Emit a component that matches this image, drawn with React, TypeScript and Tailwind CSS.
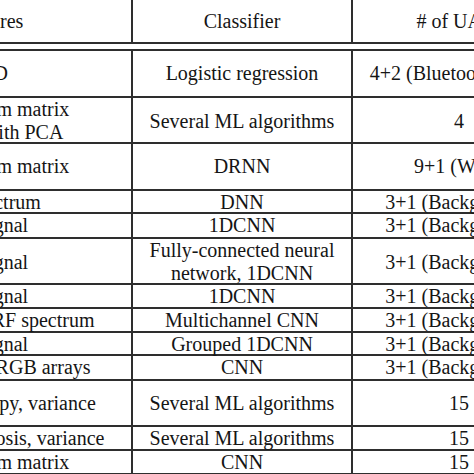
type Row = {
  h: string;
  feature: React.ReactNode;
  classifier: React.ReactNode;
  uavs: string;
};

const rows: Row[] = [
  { h: "h-[47px]", feature: "PSD", classifier: "Logistic regression", uavs: "4+2 (Bluetooth, WiFi)" },
  {
    h: "h-[46px]",
    feature: (
      <>
        Spectrogram matrix
        <br />
        reduced with PCA
      </>
    ),
    classifier: "Several ML algorithms",
    uavs: "4"
  },
  { h: "h-[47px]", feature: "Spectrogram matrix", classifier: "DRNN", uavs: "9+1 (WiFi)" },
  { h: "h-[23px]", feature: "RF spectrum", classifier: "DNN", uavs: "3+1 (Background)" },
  { h: "h-[25px]", feature: "RF signal", classifier: "1DCNN", uavs: "3+1 (Background)" },
  {
    h: "h-[46px]",
    feature: "RF signal",
    classifier: (
      <>
        Fully-connected neural
        <br />
        network, 1DCNN
      </>
    ),
    uavs: "3+1 (Background)"
  },
  { h: "h-[24px]", feature: "RF signal", classifier: "1DCNN", uavs: "3+1 (Background)" },
  { h: "h-[24px]", feature: "Raw signals, RF spectrum", classifier: "Multichannel CNN", uavs: "3+1 (Background)" },
  { h: "h-[23px]", feature: "RF signal", classifier: "Grouped 1DCNN", uavs: "3+1 (Background)" },
  { h: "h-[25px]", feature: "Spectrogram RGB arrays", classifier: "CNN", uavs: "3+1 (Background)" },
  { h: "h-[46px]", feature: "Shannon entropy, variance", classifier: "Several ML algorithms", uavs: "15" },
  { h: "h-[24px]", feature: "Skewness, kurtosis, variance", classifier: "Several ML algorithms", uavs: "15" },
  { h: "h-[24px]", feature: "Spectrogram matrix", classifier: "CNN", uavs: "15" },
  { h: "h-[24px]", feature: "Spectrogram matrix", classifier: "CNN", uavs: "15" }
];

function Cell({ children, last }: { children: React.ReactNode; last?: boolean }) {
  return (
    <div
      className={
        last
          ? "flex items-center justify-center text-center px-1"
          : "flex items-center justify-center text-center px-1 border-r-2 border-[#2e2e2e]"
      }
    >
      <span className="whitespace-nowrap">{children}</span>
    </div>
  );
}

export default function App() {
  return (
    <div className="w-[474px] h-[474px] overflow-hidden bg-white text-[#151515] font-['Liberation_Serif',serif] text-[20px] leading-[23px]">
      <div className="w-[717px] ml-[-152px]">
        <div className="grid grid-cols-[285px_220px_212px] h-[44px] border-b-2 border-[#2e2e2e]">
          <Cell>Features</Cell>
          <Cell>Classifier</Cell>
          <Cell last>
            # of UAVs
          </Cell>
        </div>
        <div className="h-[5px]" />
        <div className="border-t-2 border-[#2e2e2e]">
          {rows.map((row, i) => (
            <div
              key={i}
              className={`grid grid-cols-[285px_220px_212px] border-b-2 border-[#2e2e2e] ${row.h}`}
            >
              <Cell>{row.feature}</Cell>
              <Cell>{row.classifier}</Cell>
              <Cell last>{row.uavs}</Cell>
            </div>
          ))}
        </div>
      </div>
    </div>
  );
}
